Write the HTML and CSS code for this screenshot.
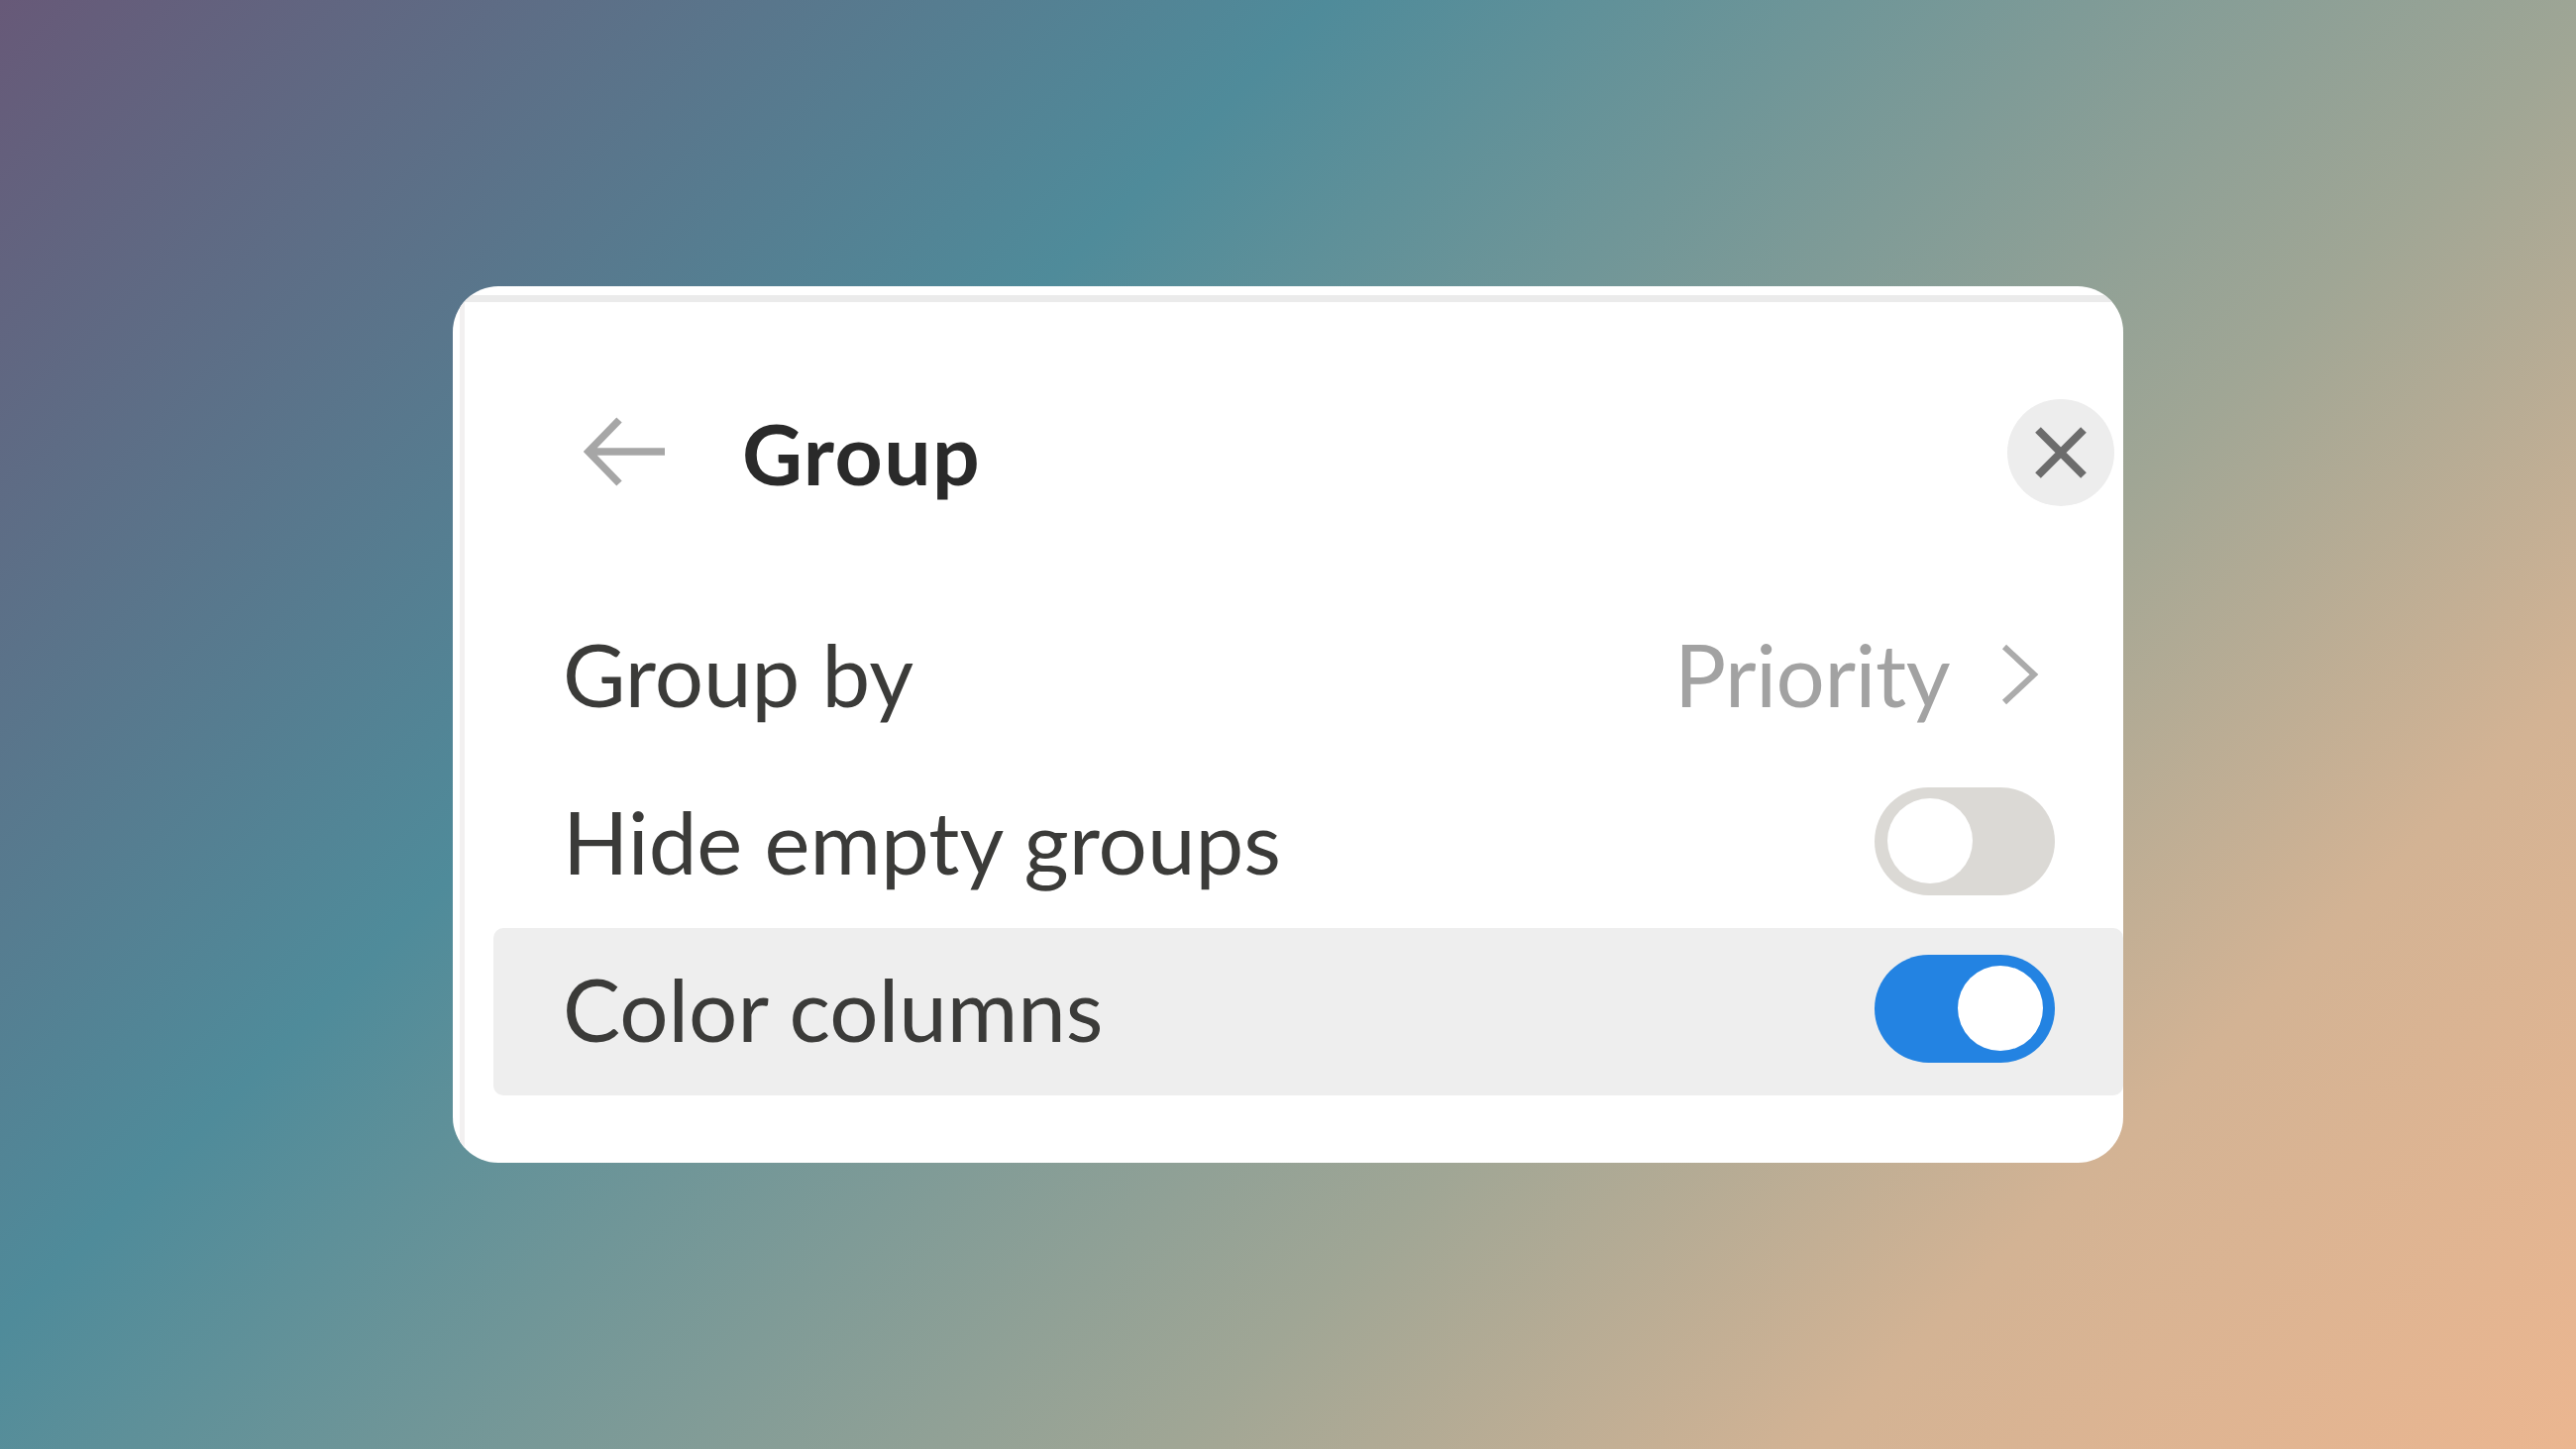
FILE: index.html
```html
<!DOCTYPE html>
<html lang="en">
  <head>
    <meta charset="UTF-8" />
    <meta name="viewport" content="width=device-width, initial-scale=1.0" />
    <title>Group</title>
    <link rel="stylesheet" href="styles.css">
  </head>
  <body class="backdrop">
    <div class="panel">
      <div class="sheet">
        <div class="sheet-header">
          <button class="icon-button back" aria-label="Back">
            <svg width="84" height="72" viewBox="0 0 84 72" fill="none">
              <path d="M82 35H6M36 3L5 35L36 67" stroke="#a6a6a6" stroke-width="7.5" />
            </svg>
          </button>
          <h2 class="sheet-title">Group</h2>
          <button class="close" aria-label="Close">
            <svg width="56" height="56" viewBox="0 0 56 56" fill="none">
              <path d="M5 5L51 51M51 5L5 51" stroke="#6c6c6c" stroke-width="8" />
            </svg>
          </button>
        </div>

        <!-- settings list -->
        <ul class="options">
          <li class="option">
            <span class="option-label">Group by</span>
            <span class="option-value">
              Priority
              <svg width="40" height="64" viewBox="0 0 40 64" fill="none">
                <path d="M5 4L35 32L5 60" stroke="#ababab" stroke-width="6" />
              </svg>
            </span>
          </li>
          <li class="option">
            <span class="option-label">Hide empty groups</span>
            <span class="switch"><span class="knob"></span></span>
          </li>
          <li class="option active">
            <span class="option-label">Color columns</span>
            <span class="switch on"><span class="knob"></span></span>
          </li>
        </ul>
      </div>
    </div>
  </body>
</html>
```

FILE: styles.css
```css
html,
body {
  height: 100%;
}

body {
  margin: 0;
  font-family: "Segoe UI", Lato, sans-serif;
  color: #3b3b39;
}

.backdrop {
  display: grid;
  place-items: center;
  background: linear-gradient(
    135deg,
    #675978 0%,
    #4f8b9a 33%,
    #a0a695 65%,
    #d3b394 81%,
    #ebb690 100%
  );
}

.panel {
  width: 1686px;
  height: 885px;
  box-sizing: border-box;
  padding: 9px 0 0 7px;
  border-radius: 46px;
  background: #fff;
  overflow: hidden;
}

.sheet {
  height: 100%;
  box-sizing: border-box;
  border-top: 7px solid #ebebeb;
  border-left: 5px solid #f2f0f0;
}

.sheet-header {
  display: flex;
  align-items: center;
  height: 108px;
  margin-top: 98px;
  padding: 0 9px 0 120px;
}

.icon-button {
  display: flex;
  padding: 0;
  border: 0;
  background: none;
}

.sheet-title {
  flex: 1;
  margin: 0 0 0 76px;
  font-size: 84px;
  font-weight: 700;
  letter-spacing: 1.5px;
  color: #2a2a2a;
}

.close {
  display: grid;
  place-items: center;
  width: 108px;
  height: 108px;
  padding: 0;
  border: 0;
  border-radius: 50%;
  background: #ededed;
}

.options {
  margin: 88px 0 0 29px;
  padding: 0;
  list-style-type: none;
}

.option {
  display: flex;
  align-items: center;
  justify-content: space-between;
  height: 169px;
  box-sizing: border-box;
  padding: 0 69px 6px 70px;
  border-radius: 10px;
  font-size: 87px;
}

.option.active {
  background: #eeeeee;
}

.option-value {
  display: flex;
  align-items: center;
  gap: 50px;
  margin-right: 16px;
  letter-spacing: -0.5px;
  color: #a2a2a2;
}

.switch {
  position: relative;
  width: 182px;
  height: 109px;
  border-radius: 55px;
  background: #dbd9d5;
}

.switch .knob {
  position: absolute;
  top: 11px;
  left: 13px;
  width: 86px;
  height: 86px;
  border-radius: 50%;
  background: #fff;
}

.switch.on {
  background: #2383e2;
}

.switch.on .knob {
  left: auto;
  right: 12px;
}
```
